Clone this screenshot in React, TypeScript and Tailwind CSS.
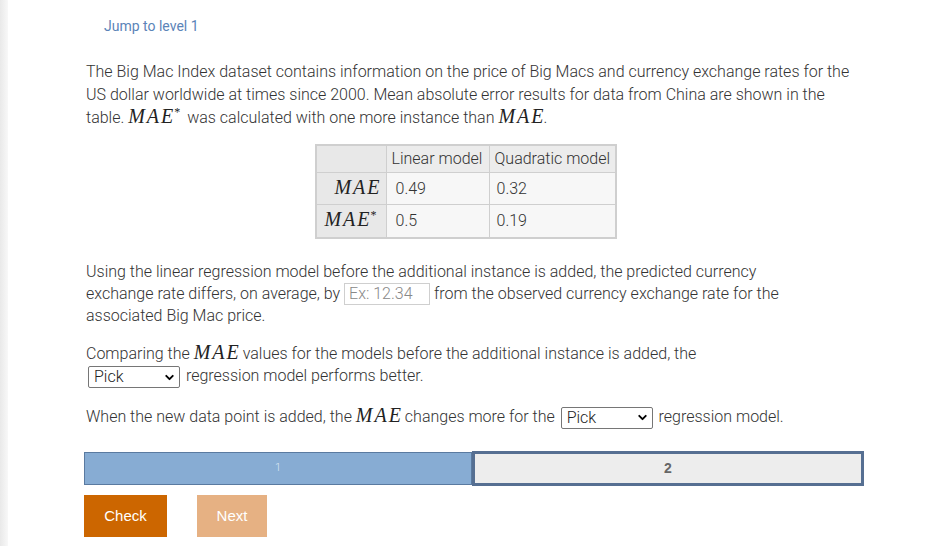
import { ChevronDown } from 'lucide-react'

function M({ star }: { star?: boolean }) {
  return (
    <span className="font-['Liberation_Serif',serif] italic text-[20px] leading-none text-[#222] tracking-[2px]">
      MA<span className="tracking-normal">E</span>
      {star && <span className="relative -top-[7px] ml-[1px] mr-[3px] not-italic text-[12px] leading-none tracking-normal">*</span>}
    </span>
  )
}

function Pick() {
  return (
    <span className="inline-flex items-center justify-between align-middle mx-[2px] h-[22px] w-[92px] border border-[#767676] rounded-[2px] bg-white pl-[5px] pr-[3px] text-[16px] leading-none text-[#222]">
      Pick
      <ChevronDown className="w-[13px] h-[13px] text-black" strokeWidth={3.5} />
    </span>
  )
}

export default function App() {
  const rows = [
    { star: false, linear: '0.49', quad: '0.32' },
    { star: true, linear: '0.5', quad: '0.19' },
  ]

  return (
    <div className="flex min-h-[546px] bg-white font-['Roboto',sans-serif] font-light text-[#333]">
      <div className="w-[8px] shrink-0 bg-gradient-to-r from-[#e9e9e9] to-[#f8f8f8]" />
      <div className="flex-1 pl-[78px]">
        <div className="pt-[16px] pl-[18px] text-[14px] leading-[20px] text-[#5b84b8] font-normal">Jump to level 1</div>

        <p className="mt-[25px] whitespace-nowrap text-[16px] leading-[22.5px]">
          The Big Mac Index dataset contains information on the price of Big Macs and currency exchange rates for the
          <br />
          US dollar worldwide at times since 2000. Mean absolute error results for data from China are shown in the
          <br />
          table. <M star /> was calculated with one more instance than <M />.
        </p>

        <table className="mt-[14px] ml-[229px] border-2 border-[#cfcfcf] border-collapse text-[16px] whitespace-nowrap">
          <thead>
            <tr className="h-[28px]">
              <th className="w-[70px] bg-[#e8e8e8] border border-[#cfcfcf]" />
              <th className="w-[103px] bg-[#ececec] border border-[#cfcfcf] px-[5px] text-left font-light">Linear model</th>
              <th className="w-[127px] bg-[#ececec] border border-[#cfcfcf] px-[5px] text-left font-light">Quadratic model</th>
            </tr>
          </thead>
          <tbody>
            {rows.map((r) => (
              <tr key={r.linear} className={r.star ? 'h-[33px]' : 'h-[32px]'}>
                <td className="bg-[#e8e8e8] border border-[#cfcfcf] pr-[6px] pl-[4px] text-right">
                  <M star={r.star} />
                </td>
                <td className="bg-[#f7f7f7] border border-[#cfcfcf] px-[9px]">{r.linear}</td>
                <td className="bg-[#f7f7f7] border border-[#cfcfcf] px-[7px]">{r.quad}</td>
              </tr>
            ))}
          </tbody>
        </table>

        <p className="mt-[22px] whitespace-nowrap text-[16px] leading-[22px]">
          Using the linear regression model before the additional instance is added, the predicted currency
          <br />
          exchange rate differs, on average, by{' '}
          <span className="inline-block align-middle h-[22px] w-[86px] border border-[#cfcfcf] px-[4px] leading-[20px] text-[#888]">
            Ex: 12.34
          </span>{' '}
          from the observed currency exchange rate for the
          <br />
          associated Big Mac price.
        </p>

        <p className="mt-[15px] whitespace-nowrap text-[16px] leading-[22px]">
          Comparing the <M /> values for the models before the additional instance is added, the
          <br />
          <Pick /> regression model performs better.
        </p>

        <p className="mt-[17px] whitespace-nowrap text-[16px] leading-[22px]">
          When the new data point is added, the <M /> changes more for the <Pick /> regression model.
        </p>

        <div className="mt-[22px] -ml-[2px] flex w-[780px]">
          <div className="w-[388px] h-[33px] mt-[1px] bg-[#87acd3] border border-[#5a7aa0] flex items-center justify-center text-[11px] text-[#dce8f4]">
            1
          </div>
          <div className="flex-1 h-[35px] bg-[#ededed] border-[3px] border-[#566f92] flex items-center justify-center text-[14px] font-bold text-[#666] font-['Liberation_Sans',sans-serif]">
            2
          </div>
        </div>

        <div className="mt-[9px] -ml-[2px] flex gap-[30px] font-['Liberation_Sans',sans-serif] text-[15px] text-white">
          <button className="w-[83px] h-[42px] bg-[#cc6600]">Check</button>
          <button className="w-[70px] h-[42px] bg-[#e6b183]">Next</button>
        </div>
      </div>
    </div>
  )
}
